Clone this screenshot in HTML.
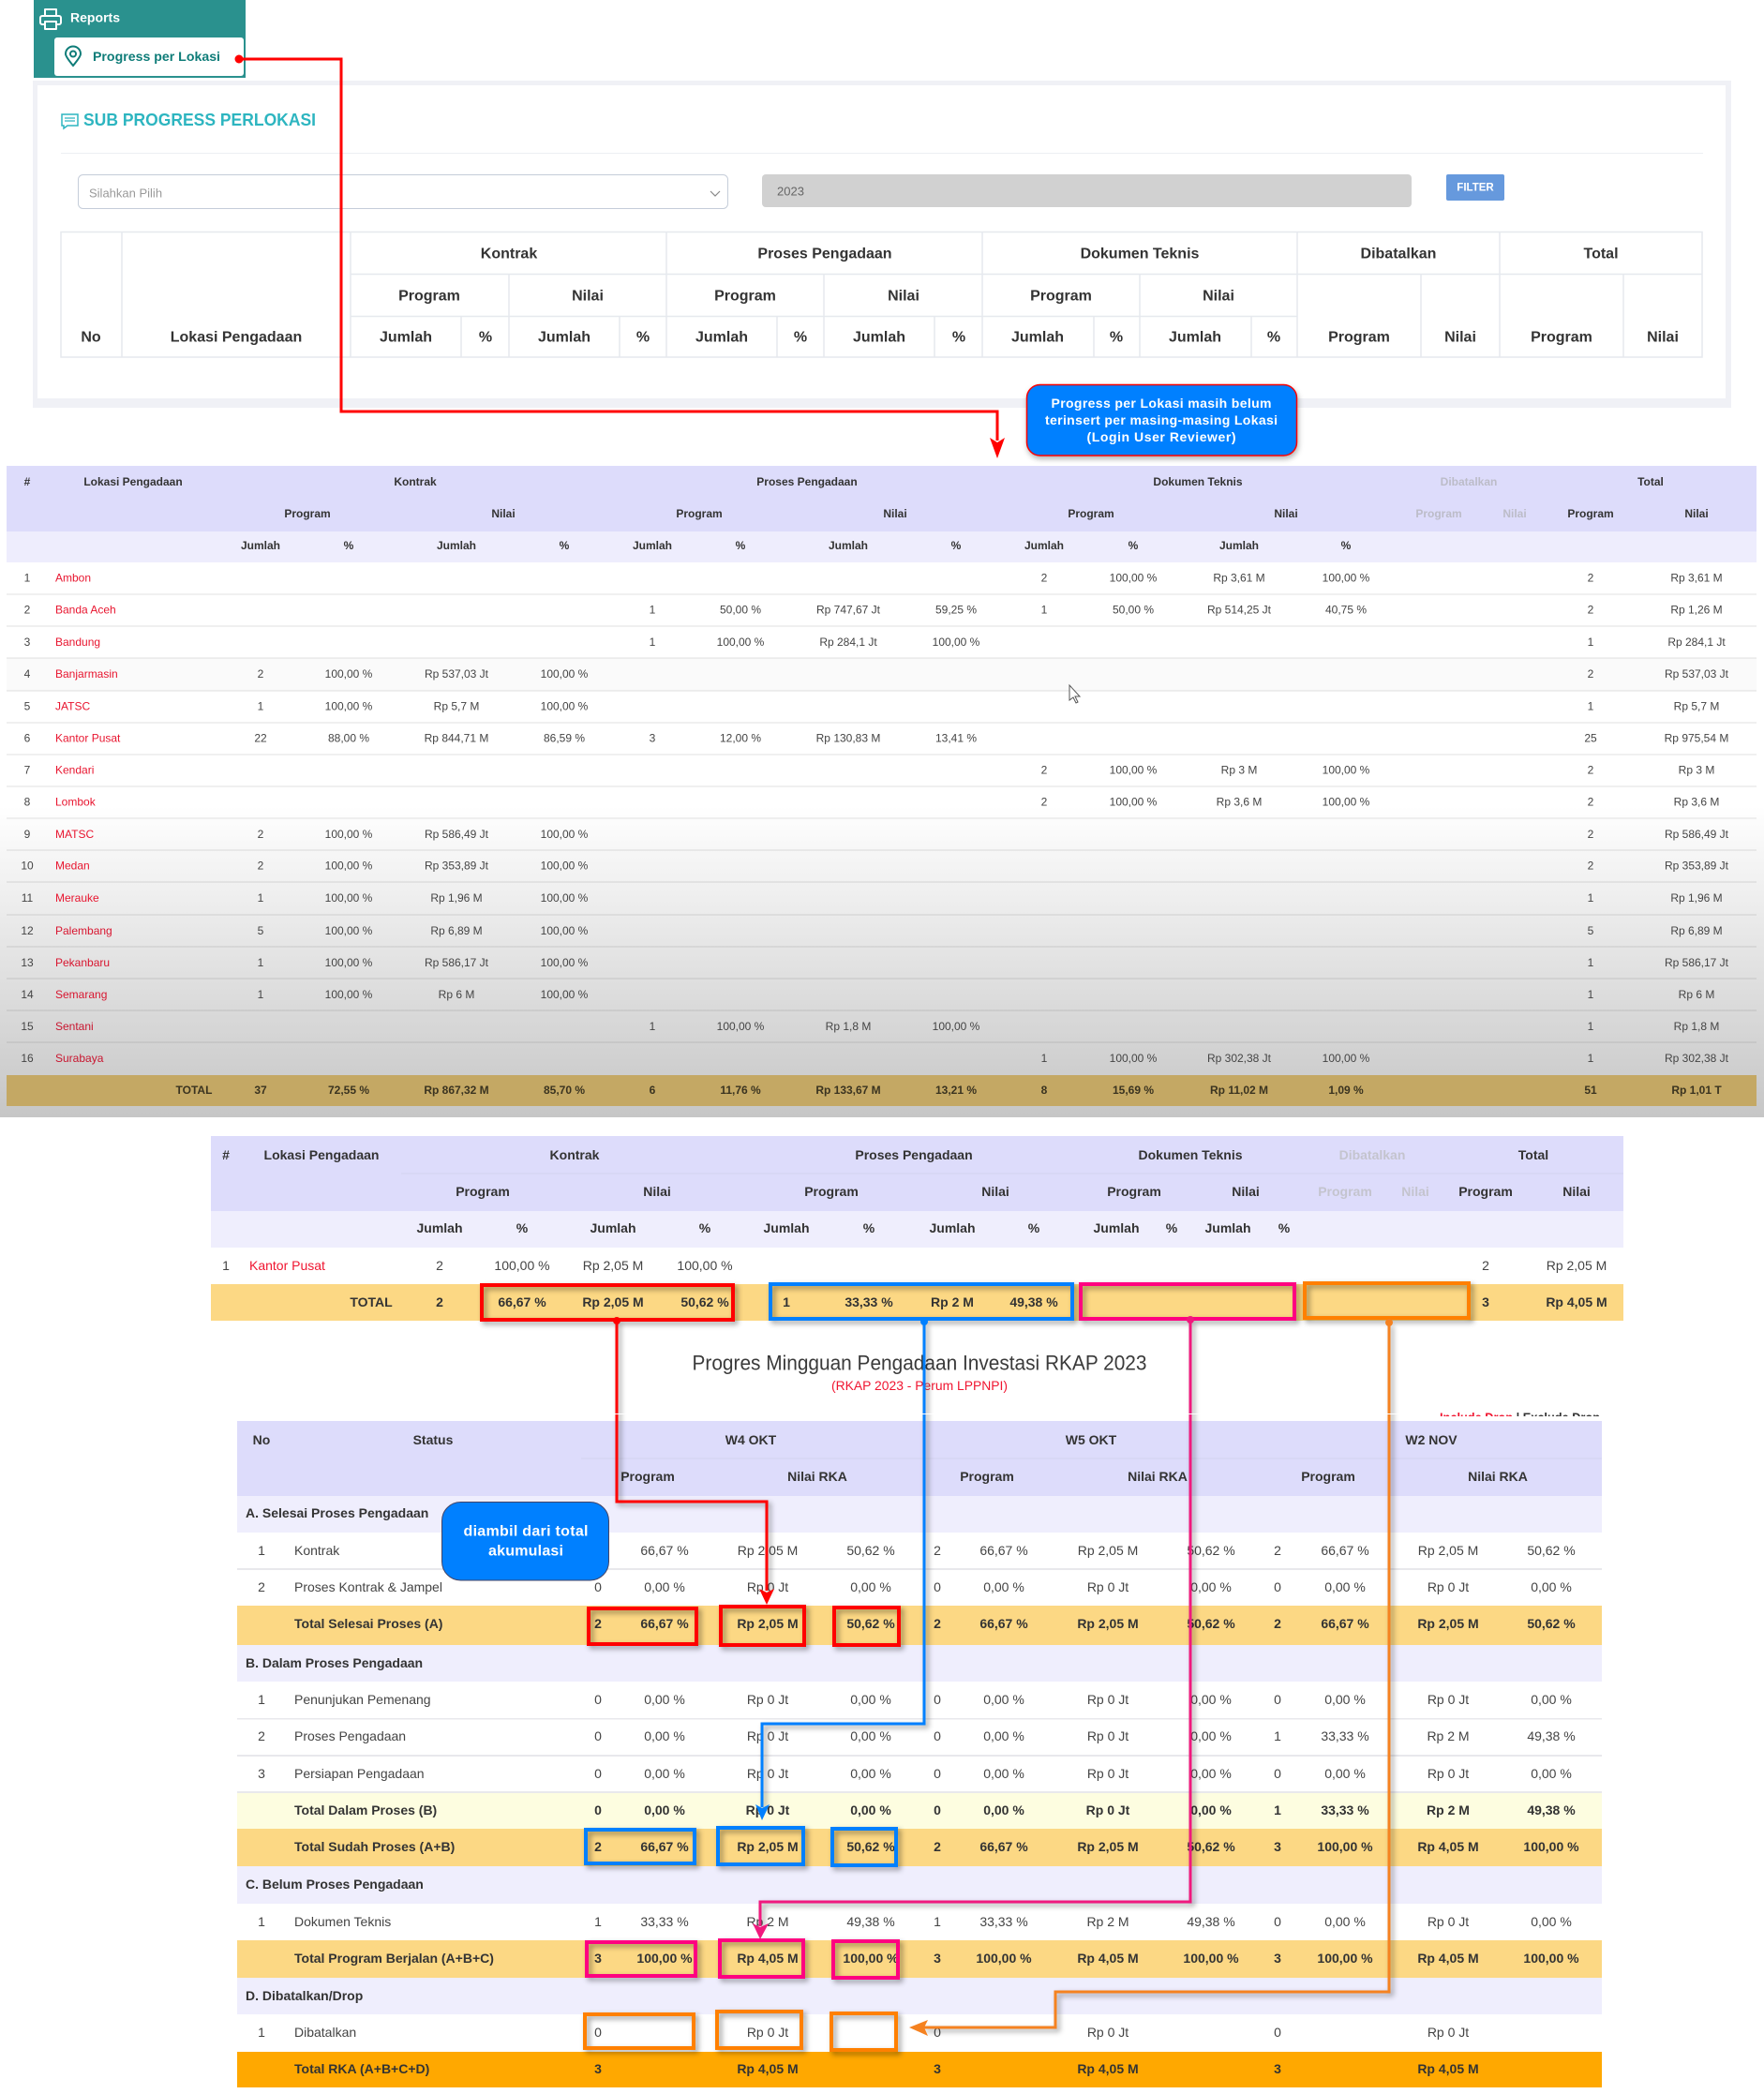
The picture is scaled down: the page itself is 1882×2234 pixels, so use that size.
<!DOCTYPE html>
<html lang="id"><head><meta charset="utf-8"><title>Progress per Lokasi</title>
<style>
html,body{margin:0;padding:0;background:#fff}
svg{display:block}
text{font-family:"Liberation Sans",Arial,sans-serif;dominant-baseline:central;text-anchor:middle}
text.s{text-anchor:start}
.b{font-weight:bold}
.sh{filter:drop-shadow(3px 3px 3px rgba(0,0,0,.4))}
.bl{filter:blur(.35px)}
.bm{filter:blur(.2px)}
</style></head><body>
<svg xmlns="http://www.w3.org/2000/svg" width="1882" height="2234" viewBox="0 0 1882 2234">
<defs>
<linearGradient id="gr" x1="0" y1="0" x2="0" y2="1"><stop offset="0" stop-color="#fff"/><stop offset="1" stop-color="#c6c6c6"/></linearGradient>
<clipPath id="cp"><rect x="1500" y="1495" width="240" height="16"/></clipPath>
</defs>
<rect width="1882" height="2234" fill="#fff"/>

<!-- sidebar -->
<rect x="36" y="0" width="226" height="83" fill="#2a918e"/>
<rect x="58" y="40" width="202" height="41" rx="3" fill="#fff"/>
<g fill="none" stroke="#fff" stroke-width="2" stroke-linejoin="round"><path d="M48 17V10h12v7"/><path d="M48 26h-3a2 2 0 0 1-2-2v-5a2 2 0 0 1 2-2h18a2 2 0 0 1 2 2v5a2 2 0 0 1-2 2h-3"/><rect x="48" y="23" width="12" height="8"/></g>
<text class="s b" x="75" y="19" font-size="13.5" fill="#fff" textLength="53" lengthAdjust="spacingAndGlyphs">Reports</text>
<g fill="none" stroke="#0e7c78" stroke-width="2"><path d="M78 70C73 64 70 60 70 57.500a8 8 0 0 1 16 0C86 60 83 64 78 70z"/><circle cx="78" cy="57.500" r="3"/></g>
<text class="s b" x="99" y="60" font-size="14" fill="#0e7c78" textLength="136" lengthAdjust="spacingAndGlyphs">Progress per Lokasi</text>

<!-- panel -->
<rect x="35" y="86" width="1812" height="349" fill="#f0f1f6"/>
<rect x="40" y="91" width="1801" height="334" fill="#fff"/>
<g fill="none" stroke="#2db5c0" stroke-width="1.500"><path d="M66 122h17v12H72l-4 3v-3h-2z"/><path d="M69 126h11M69 129h11" stroke-width="1.200"/></g>
<text class="s b" x="89" y="128" font-size="18" fill="#2db5c0" textLength="248" lengthAdjust="spacingAndGlyphs">SUB PROGRESS PERLOKASI</text>
<rect x="65" y="163" width="1752" height="1" fill="#edeff3"/>
<rect x="83.500" y="186.500" width="693" height="36" rx="5" fill="#fff" stroke="#c5cdd9"/>
<text class="s" x="95" y="206" font-size="13" fill="#999">Silahkan Pilih</text>
<path d="M758 204l5 5 5-5" fill="none" stroke="#888" stroke-width="1.200"/>
<rect x="813" y="186" width="693" height="35" rx="4" fill="#d1d1d1"/>
<text class="s" x="829" y="204" font-size="13" fill="#666">2023</text>
<rect x="1543" y="186" width="62" height="28" rx="2" fill="#6699dd"/>
<text class="b" x="1574" y="200.500" font-size="11.500" fill="#fff">FILTER</text>

<!-- header table 1 -->
<g fill="none" stroke="#e6e9ee" stroke-width="1.500">
<rect x="65" y="247.500" width="1751" height="133.500"/>
<path d="M374 292.500H1816M374 337.500H1384"/>
<path d="M130 247V381M374 247V381M711 247V381M1048 247V381M1384 247V381M1600 247V381M543 292V381M879 292V381M1216 292V381M492 337V381M661 337V381M829 337V381M997 337V381M1167 337V381M1335 337V381M1516 292V381M1732 292V381"/>
</g>
<g class="b" font-size="16" font-weight="bold" fill="#333">
<g transform="translate(0,271)"><text x="543">Kontrak</text><text x="880">Proses Pengadaan</text><text x="1216">Dokumen Teknis</text><text x="1492">Dibatalkan</text><text x="1708">Total</text></g>
<g transform="translate(0,316)"><text x="458">Program</text><text x="627">Nilai</text><text x="795">Program</text><text x="964">Nilai</text><text x="1132">Program</text><text x="1300">Nilai</text></g>
<g transform="translate(0,360)"><text x="97">No</text><text x="252">Lokasi Pengadaan</text><text x="433">Jumlah</text><text x="518">%</text><text x="602">Jumlah</text><text x="686">%</text><text x="770">Jumlah</text><text x="854">%</text><text x="938">Jumlah</text><text x="1023">%</text><text x="1107">Jumlah</text><text x="1191">%</text><text x="1275">Jumlah</text><text x="1359">%</text><text x="1450">Program</text><text x="1558">Nilai</text><text x="1666">Program</text><text x="1774">Nilai</text></g>
</g>

<!-- table 2 backgrounds -->
<rect x="0" y="860" width="1882" height="332" fill="url(#gr)"/>
<rect x="7" y="497" width="1867" height="70" fill="#dddcfb"/>
<rect x="7" y="567" width="1867" height="33" fill="#eeedfd"/>
<rect x="7" y="702" width="1867" height="35" fill="#fafafa"/>
<g fill="#000" fill-opacity=".06">
<rect x="7" y="633" width="1867" height="2"/><rect x="7" y="667" width="1867" height="2"/><rect x="7" y="701" width="1867" height="2"/><rect x="7" y="736" width="1867" height="2"/><rect x="7" y="770" width="1867" height="2"/><rect x="7" y="804" width="1867" height="2"/><rect x="7" y="838" width="1867" height="2"/><rect x="7" y="872" width="1867" height="2"/><rect x="7" y="906" width="1867" height="2"/><rect x="7" y="940" width="1867" height="2"/><rect x="7" y="975" width="1867" height="2"/><rect x="7" y="1009" width="1867" height="2"/><rect x="7" y="1043" width="1867" height="2"/><rect x="7" y="1077" width="1867" height="2"/><rect x="7" y="1111" width="1867" height="2"/>
</g>
<rect x="7" y="1147" width="1867" height="33" fill="#c4a864"/>

<g font-size="12" font-weight="bold" fill="#333" class="bl">
<g transform="translate(0,514)"><text x="29">#</text><text x="142">Lokasi Pengadaan</text><text x="443">Kontrak</text><text x="861">Proses Pengadaan</text><text x="1278">Dokumen Teknis</text><text x="1567" fill="#bcbcc8">Dibatalkan</text><text x="1761">Total</text></g>
<g transform="translate(0,548)"><text x="328">Program</text><text x="537">Nilai</text><text x="746">Program</text><text x="955">Nilai</text><text x="1164">Program</text><text x="1372">Nilai</text><text x="1535" fill="#bcbcc8">Program</text><text x="1616" fill="#bcbcc8">Nilai</text><text x="1697">Program</text><text x="1810">Nilai</text></g>
<g transform="translate(0,582)"><text x="278">Jumlah</text><text x="372">%</text><text x="487">Jumlah</text><text x="602">%</text><text x="696">Jumlah</text><text x="790">%</text><text x="905">Jumlah</text><text x="1020">%</text><text x="1114">Jumlah</text><text x="1209">%</text><text x="1322">Jumlah</text><text x="1436">%</text></g>
</g>
<g font-size="12" fill="#444" class="bl">
<g transform="translate(0,616.500)"><text x="29">1</text><text class="s" x="59" fill="#e8152f">Ambon</text><text x="1114">2</text><text x="1209">100,00 %</text><text x="1322">Rp 3,61 M</text><text x="1436">100,00 %</text><text x="1697">2</text><text x="1810">Rp 3,61 M</text></g>
<g transform="translate(0,650.700)"><text x="29">2</text><text class="s" x="59" fill="#e8152f">Banda Aceh</text><text x="696">1</text><text x="790">50,00 %</text><text x="905">Rp 747,67 Jt</text><text x="1020">59,25 %</text><text x="1114">1</text><text x="1209">50,00 %</text><text x="1322">Rp 514,25 Jt</text><text x="1436">40,75 %</text><text x="1697">2</text><text x="1810">Rp 1,26 M</text></g>
<g transform="translate(0,684.900)"><text x="29">3</text><text class="s" x="59" fill="#e8152f">Bandung</text><text x="696">1</text><text x="790">100,00 %</text><text x="905">Rp 284,1 Jt</text><text x="1020">100,00 %</text><text x="1697">1</text><text x="1810">Rp 284,1 Jt</text></g>
<g transform="translate(0,719)"><text x="29">4</text><text class="s" x="59" fill="#e8152f">Banjarmasin</text><text x="278">2</text><text x="372">100,00 %</text><text x="487">Rp 537,03 Jt</text><text x="602">100,00 %</text><text x="1697">2</text><text x="1810">Rp 537,03 Jt</text></g>
<g transform="translate(0,753.500)"><text x="29">5</text><text class="s" x="59" fill="#e8152f">JATSC</text><text x="278">1</text><text x="372">100,00 %</text><text x="487">Rp 5,7 M</text><text x="602">100,00 %</text><text x="1697">1</text><text x="1810">Rp 5,7 M</text></g>
<g transform="translate(0,787.500)"><text x="29">6</text><text class="s" x="59" fill="#e8152f">Kantor Pusat</text><text x="278">22</text><text x="372">88,00 %</text><text x="487">Rp 844,71 M</text><text x="602">86,59 %</text><text x="696">3</text><text x="790">12,00 %</text><text x="905">Rp 130,83 M</text><text x="1020">13,41 %</text><text x="1697">25</text><text x="1810">Rp 975,54 M</text></g>
<g transform="translate(0,821.700)"><text x="29">7</text><text class="s" x="59" fill="#e8152f">Kendari</text><text x="1114">2</text><text x="1209">100,00 %</text><text x="1322">Rp 3 M</text><text x="1436">100,00 %</text><text x="1697">2</text><text x="1810">Rp 3 M</text></g>
<g transform="translate(0,855.700)"><text x="29">8</text><text class="s" x="59" fill="#e8152f">Lombok</text><text x="1114">2</text><text x="1209">100,00 %</text><text x="1322">Rp 3,6 M</text><text x="1436">100,00 %</text><text x="1697">2</text><text x="1810">Rp 3,6 M</text></g>
<g transform="translate(0,890)"><text x="29">9</text><text class="s" x="59" fill="#e8152f">MATSC</text><text x="278">2</text><text x="372">100,00 %</text><text x="487">Rp 586,49 Jt</text><text x="602">100,00 %</text><text x="1697">2</text><text x="1810">Rp 586,49 Jt</text></g>
<g transform="translate(0,923.700)"><text x="29">10</text><text class="s" x="59" fill="#e8152f">Medan</text><text x="278">2</text><text x="372">100,00 %</text><text x="487">Rp 353,89 Jt</text><text x="602">100,00 %</text><text x="1697">2</text><text x="1810">Rp 353,89 Jt</text></g>
<g transform="translate(0,958)"><text x="29">11</text><text class="s" x="59" fill="#e8152f">Merauke</text><text x="278">1</text><text x="372">100,00 %</text><text x="487">Rp 1,96 M</text><text x="602">100,00 %</text><text x="1697">1</text><text x="1810">Rp 1,96 M</text></g>
<g transform="translate(0,993)"><text x="29">12</text><text class="s" x="59" fill="#d8152f">Palembang</text><text x="278">5</text><text x="372">100,00 %</text><text x="487">Rp 6,89 M</text><text x="602">100,00 %</text><text x="1697">5</text><text x="1810">Rp 6,89 M</text></g>
<g transform="translate(0,1027)"><text x="29">13</text><text class="s" x="59" fill="#d8152f">Pekanbaru</text><text x="278">1</text><text x="372">100,00 %</text><text x="487">Rp 586,17 Jt</text><text x="602">100,00 %</text><text x="1697">1</text><text x="1810">Rp 586,17 Jt</text></g>
<g transform="translate(0,1061)"><text x="29">14</text><text class="s" x="59" fill="#d8152f">Semarang</text><text x="278">1</text><text x="372">100,00 %</text><text x="487">Rp 6 M</text><text x="602">100,00 %</text><text x="1697">1</text><text x="1810">Rp 6 M</text></g>
<g transform="translate(0,1095)"><text x="29">15</text><text class="s" x="59" fill="#c8152f">Sentani</text><text x="696">1</text><text x="790">100,00 %</text><text x="905">Rp 1,8 M</text><text x="1020">100,00 %</text><text x="1697">1</text><text x="1810">Rp 1,8 M</text></g>
<g transform="translate(0,1129)"><text x="29">16</text><text class="s" x="59" fill="#c8152f">Surabaya</text><text x="1114">1</text><text x="1209">100,00 %</text><text x="1322">Rp 302,38 Jt</text><text x="1436">100,00 %</text><text x="1697">1</text><text x="1810">Rp 302,38 Jt</text></g>
<g transform="translate(0,1163)" font-weight="bold" fill="#3a3320"><text x="207">TOTAL</text><text x="278">37</text><text x="372">72,55 %</text><text x="487">Rp 867,32 M</text><text x="602">85,70 %</text><text x="696">6</text><text x="790">11,76 %</text><text x="905">Rp 133,67 M</text><text x="1020">13,21 %</text><text x="1114">8</text><text x="1209">15,69 %</text><text x="1322">Rp 11,02 M</text><text x="1436">1,09 %</text><text x="1697">51</text><text x="1810">Rp 1,01 T</text></g>
</g>
<!-- cursor -->
<path d="M1141 731v16l4-3 3 6 2-1-3-6h5z" fill="#fff" stroke="#555" stroke-width="1"/>

<!-- table 3 -->
<rect x="225" y="1212" width="1507" height="80" fill="#dddcfb"/>
<rect x="428" y="1251.500" width="1304" height="1" fill="#d4d3ef"/>
<rect x="225" y="1292" width="1507" height="39" fill="#efeefd"/>
<rect x="225" y="1370" width="1507" height="39" fill="#fcd884"/>
<g font-size="14" font-weight="bold" fill="#333" class="bm">
<g transform="translate(0,1232)"><text x="241">#</text><text x="343">Lokasi Pengadaan</text><text x="613">Kontrak</text><text x="975">Proses Pengadaan</text><text x="1270">Dokumen Teknis</text><text x="1464" fill="#c4c4ce">Dibatalkan</text><text x="1636">Total</text></g>
<g transform="translate(0,1271)"><text x="515">Program</text><text x="701">Nilai</text><text x="887">Program</text><text x="1062">Nilai</text><text x="1210">Program</text><text x="1329">Nilai</text><text x="1435" fill="#c4c4ce">Program</text><text x="1510" fill="#c4c4ce">Nilai</text><text x="1585">Program</text><text x="1682">Nilai</text></g>
<g transform="translate(0,1310)"><text x="469">Jumlah</text><text x="557">%</text><text x="654">Jumlah</text><text x="752">%</text><text x="839">Jumlah</text><text x="927">%</text><text x="1016">Jumlah</text><text x="1103">%</text><text x="1191">Jumlah</text><text x="1250">%</text><text x="1310">Jumlah</text><text x="1370">%</text></g>
<g transform="translate(0,1389)"><text x="396">TOTAL</text><text x="469">2</text><text x="557">66,67 %</text><text x="654">Rp 2,05 M</text><text x="752">50,62 %</text><text x="839">1</text><text x="927">33,33 %</text><text x="1016">Rp 2 M</text><text x="1103">49,38 %</text><text x="1585">3</text><text x="1682">Rp 4,05 M</text></g>
</g>
<g transform="translate(0,1350)" font-size="14" fill="#444"><text x="241">1</text><text class="s" x="266" fill="#f01530">Kantor Pusat</text><text x="469">2</text><text x="557">100,00 %</text><text x="654">Rp 2,05 M</text><text x="752">100,00 %</text><text x="1585">2</text><text x="1682">Rp 2,05 M</text></g>

<!-- titles -->
<text x="981" y="1454" font-size="22" fill="#3a3a3a" textLength="485" lengthAdjust="spacingAndGlyphs">Progres Mingguan Pengadaan Investasi RKAP 2023</text>
<text x="981" y="1478" font-size="14" fill="#f01530" textLength="188" lengthAdjust="spacingAndGlyphs">(RKAP 2023 - Perum LPPNPI)</text>
<g clip-path="url(#cp)"><text class="s b" x="1536" y="1512" font-size="14" fill="#f01530" textLength="171" lengthAdjust="spacingAndGlyphs">Include Drop<tspan fill="#333"> | Exclude Drop</tspan></text></g>

<!-- table 4 backgrounds -->
<rect x="253" y="1516" width="1456" height="80" fill="#dddcfb"/>
<rect x="620" y="1555.500" width="1089" height="1" fill="#d4d3ef"/>
<g fill="#efeefd"><rect x="253" y="1596" width="1456" height="39"/><rect x="253" y="1755" width="1456" height="39"/><rect x="253" y="1991" width="1456" height="40"/><rect x="253" y="2110" width="1456" height="39"/></g>
<g fill="#fcd884"><rect x="253" y="1713" width="1456" height="42"/><rect x="253" y="1951" width="1456" height="40"/><rect x="253" y="2070" width="1456" height="40"/></g>
<rect x="253" y="1912" width="1456" height="39" fill="#fdfde0"/>
<rect x="253" y="2189" width="1456" height="38" fill="#ffa800"/>
<g fill="#e8e8ec"><rect x="253" y="1673" width="1456" height="2"/><rect x="253" y="1833" width="1456" height="1.500"/><rect x="253" y="1872" width="1456" height="2"/><rect x="253" y="1911" width="1456" height="2"/></g>

<g font-size="14" font-weight="bold" fill="#333" class="bm">
<g transform="translate(0,1536)"><text x="279">No</text><text x="462">Status</text><text x="801">W4 OKT</text><text x="1164">W5 OKT</text><text x="1527">W2 NOV</text></g>
<g transform="translate(0,1575)"><text x="691">Program</text><text x="872">Nilai RKA</text><text x="1053">Program</text><text x="1235">Nilai RKA</text><text x="1417">Program</text><text x="1598">Nilai RKA</text></g>
<text class="s" x="262" y="1614">A. Selesai Proses Pengadaan</text>
<text class="s" x="262" y="1774">B. Dalam Proses Pengadaan</text>
<text class="s" x="262" y="2010">C. Belum Proses Pengadaan</text>
<text class="s" x="262" y="2129">D. Dibatalkan/Drop</text>
<g transform="translate(0,1732)"><text class="s" x="314">Total Selesai Proses (A)</text><text x="638">2</text><text x="709">66,67 %</text><text x="819">Rp 2,05 M</text><text x="929">50,62 %</text><text x="1000">2</text><text x="1071">66,67 %</text><text x="1182">Rp 2,05 M</text><text x="1292">50,62 %</text><text x="1363">2</text><text x="1435">66,67 %</text><text x="1545">Rp 2,05 M</text><text x="1655">50,62 %</text></g>
<g transform="translate(0,1931)"><text class="s" x="314">Total Dalam Proses (B)</text><text x="638">0</text><text x="709">0,00 %</text><text x="819">Rp 0 Jt</text><text x="929">0,00 %</text><text x="1000">0</text><text x="1071">0,00 %</text><text x="1182">Rp 0 Jt</text><text x="1292">0,00 %</text><text x="1363">1</text><text x="1435">33,33 %</text><text x="1545">Rp 2 M</text><text x="1655">49,38 %</text></g>
<g transform="translate(0,1970)"><text class="s" x="314">Total Sudah Proses (A+B)</text><text x="638">2</text><text x="709">66,67 %</text><text x="819">Rp 2,05 M</text><text x="929">50,62 %</text><text x="1000">2</text><text x="1071">66,67 %</text><text x="1182">Rp 2,05 M</text><text x="1292">50,62 %</text><text x="1363">3</text><text x="1435">100,00 %</text><text x="1545">Rp 4,05 M</text><text x="1655">100,00 %</text></g>
<g transform="translate(0,2089)"><text class="s" x="314">Total Program Berjalan (A+B+C)</text><text x="638">3</text><text x="709">100,00 %</text><text x="819">Rp 4,05 M</text><text x="929">100,00 %</text><text x="1000">3</text><text x="1071">100,00 %</text><text x="1182">Rp 4,05 M</text><text x="1292">100,00 %</text><text x="1363">3</text><text x="1435">100,00 %</text><text x="1545">Rp 4,05 M</text><text x="1655">100,00 %</text></g>
<g transform="translate(0,2207)"><text class="s" x="314">Total RKA (A+B+C+D)</text><text x="638">3</text><text x="819">Rp 4,05 M</text><text x="1000">3</text><text x="1182">Rp 4,05 M</text><text x="1363">3</text><text x="1545">Rp 4,05 M</text></g>
</g>
<g font-size="14" fill="#444" class="bm">
<g transform="translate(0,1654)"><text x="279">1</text><text class="s" x="314">Kontrak</text><text x="638">2</text><text x="709">66,67 %</text><text x="819">Rp 2,05 M</text><text x="929">50,62 %</text><text x="1000">2</text><text x="1071">66,67 %</text><text x="1182">Rp 2,05 M</text><text x="1292">50,62 %</text><text x="1363">2</text><text x="1435">66,67 %</text><text x="1545">Rp 2,05 M</text><text x="1655">50,62 %</text></g>
<g transform="translate(0,1693)"><text x="279">2</text><text class="s" x="314">Proses Kontrak &amp; Jampel</text><text x="638">0</text><text x="709">0,00 %</text><text x="819">Rp 0 Jt</text><text x="929">0,00 %</text><text x="1000">0</text><text x="1071">0,00 %</text><text x="1182">Rp 0 Jt</text><text x="1292">0,00 %</text><text x="1363">0</text><text x="1435">0,00 %</text><text x="1545">Rp 0 Jt</text><text x="1655">0,00 %</text></g>
<g transform="translate(0,1813)"><text x="279">1</text><text class="s" x="314">Penunjukan Pemenang</text><text x="638">0</text><text x="709">0,00 %</text><text x="819">Rp 0 Jt</text><text x="929">0,00 %</text><text x="1000">0</text><text x="1071">0,00 %</text><text x="1182">Rp 0 Jt</text><text x="1292">0,00 %</text><text x="1363">0</text><text x="1435">0,00 %</text><text x="1545">Rp 0 Jt</text><text x="1655">0,00 %</text></g>
<g transform="translate(0,1852)"><text x="279">2</text><text class="s" x="314">Proses Pengadaan</text><text x="638">0</text><text x="709">0,00 %</text><text x="819">Rp 0 Jt</text><text x="929">0,00 %</text><text x="1000">0</text><text x="1071">0,00 %</text><text x="1182">Rp 0 Jt</text><text x="1292">0,00 %</text><text x="1363">1</text><text x="1435">33,33 %</text><text x="1545">Rp 2 M</text><text x="1655">49,38 %</text></g>
<g transform="translate(0,1892)"><text x="279">3</text><text class="s" x="314">Persiapan Pengadaan</text><text x="638">0</text><text x="709">0,00 %</text><text x="819">Rp 0 Jt</text><text x="929">0,00 %</text><text x="1000">0</text><text x="1071">0,00 %</text><text x="1182">Rp 0 Jt</text><text x="1292">0,00 %</text><text x="1363">0</text><text x="1435">0,00 %</text><text x="1545">Rp 0 Jt</text><text x="1655">0,00 %</text></g>
<g transform="translate(0,2050)"><text x="279">1</text><text class="s" x="314">Dokumen Teknis</text><text x="638">1</text><text x="709">33,33 %</text><text x="819">Rp 2 M</text><text x="929">49,38 %</text><text x="1000">1</text><text x="1071">33,33 %</text><text x="1182">Rp 2 M</text><text x="1292">49,38 %</text><text x="1363">0</text><text x="1435">0,00 %</text><text x="1545">Rp 0 Jt</text><text x="1655">0,00 %</text></g>
<g transform="translate(0,2168)"><text x="279">1</text><text class="s" x="314">Dibatalkan</text><text x="638">0</text><text x="819">Rp 0 Jt</text><text x="1000">0</text><text x="1182">Rp 0 Jt</text><text x="1363">0</text><text x="1545">Rp 0 Jt</text></g>
</g>

<!-- annotations: top red arrow -->
<g fill="none" stroke="#f00" stroke-width="3"><path d="M255 63H364V439H1064V470"/></g>
<circle cx="255" cy="63" r="4.500" fill="#f00"/>
<path d="M1056 467L1064 489L1072 467L1064 472z" fill="#f00"/>
<rect x="1095.500" y="410.500" width="288" height="75.500" rx="14" fill="#0080ff" stroke="#f00" stroke-width="1.500" style="filter:drop-shadow(1px 3px 3px rgba(0,0,0,.3))"/>
<g font-size="14" font-weight="bold" fill="#fff">
<text x="1239" y="430" textLength="235" lengthAdjust="spacing">Progress per Lokasi masih belum</text>
<text x="1239" y="448" textLength="248" lengthAdjust="spacing">terinsert per masing-masing Lokasi</text>
<text x="1239" y="466" textLength="159" lengthAdjust="spacing">(Login User Reviewer)</text>
</g>

<!-- highlight boxes -->
<g fill="none" stroke-width="4" class="sh">
<g stroke="#f00"><rect x="514" y="1371" width="268" height="37"/><rect x="628" y="1716" width="115" height="38"/><rect x="769" y="1714" width="89" height="41"/><rect x="890" y="1715" width="69" height="40"/></g>
<g stroke="#0080ff"><rect x="822" y="1370" width="322" height="37"/><rect x="625" y="1952" width="116" height="36"/><rect x="766" y="1950" width="91" height="39"/><rect x="888" y="1951" width="68" height="39"/></g>
<g stroke="#ff0080"><rect x="1153" y="1370" width="228" height="37"/><rect x="626" y="2072" width="116" height="36"/><rect x="768" y="2070" width="89" height="39"/><rect x="889" y="2071" width="69" height="39"/></g>
<g stroke="#ff8000"><rect x="1392" y="1369" width="175" height="37"/><rect x="624" y="2149" width="116" height="36"/><rect x="765" y="2146" width="90" height="39"/><rect x="887" y="2148" width="69" height="39"/></g>
</g>

<!-- connectors -->
<g fill="none" stroke-width="3" class="sh">
<path d="M658 1409V1602H818V1697" stroke="#f00"/>
<path d="M986 1410V1839H813V1928" stroke="#0080ff"/>
<path d="M1270 1408V2029H811V2055" stroke="#f0197d"/>
<path d="M1482 1411V2125H1126V2163H985" stroke="#f58220"/>
</g>
<circle cx="658" cy="1409" r="4" fill="#f00"/>
<circle cx="986" cy="1410" r="4" fill="#0080ff"/>
<circle cx="1270" cy="1408" r="4" fill="#f0197d"/>
<circle cx="1482" cy="1411" r="4" fill="#f58220"/>
<path d="M810 1695L818 1712L826 1695L818 1699z" fill="#f00"/>
<path d="M806 1925L813 1942L821 1925L813 1929z" fill="#0080ff"/>
<path d="M803 2052L811 2069L820 2052L811 2056z" fill="#f0197d"/>
<path d="M970 2163L990 2155L986 2163L990 2172z" fill="#f58220"/>
<g stroke="#fff" stroke-width="1"><path d="M650 1508.500H670M978 1508.500H998M1262 1508.500H1282M1474 1508.500H1494"/></g>

<!-- callout 2 -->
<rect x="471.500" y="1602.500" width="178" height="83.500" rx="20" fill="#0080ff" stroke="#446" stroke-width="1"/>
<g font-size="16" font-weight="bold" fill="#fff">
<text x="561" y="1634" textLength="133" lengthAdjust="spacing">diambil dari total</text>
<text x="561" y="1655" textLength="80" lengthAdjust="spacing">akumulasi</text>
</g>
</svg>
</body></html>
